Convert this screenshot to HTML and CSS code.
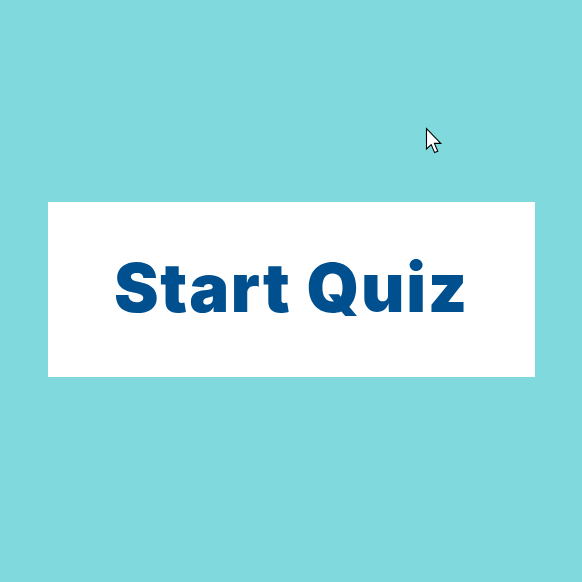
FILE: index.html
```html
<!DOCTYPE html>
<html>
<head>
<meta charset="utf-8">
<link rel="stylesheet" href="styles.css">
</head>
<body>
<div class="stage">
  <button class="start-btn">Start Quiz</button>
  <svg class="cursor" width="20" height="30" viewBox="0 0 20 30">
    <path d="M1.5 1.5 L1.5 22 L6.2 17.6 L9.6 25.6 L12.8 24.2 L9.4 16.4 L15.8 16.4 Z" fill="#ffffff" stroke="#000000" stroke-width="1.1" stroke-linejoin="miter"/>
  </svg>
</div>
</body>
</html>
```
FILE: styles.css
```css
html, body {
  margin: 0;
  padding: 0;
}
body {
  width: 582px;
  height: 582px;
  background: #7fd9dd;
  overflow: hidden;
}
.stage {
  position: relative;
  width: 582px;
  height: 582px;
  padding-top: 202px;
  padding-left: 48px;
  box-sizing: border-box;
}
.start-btn {
  display: flex;
  align-items: center;
  justify-content: center;
  width: 487px;
  height: 175px;
  border: none;
  margin: 0;
  padding: 0 0 4px 0;
  background: #ffffff;
  color: #00508f;
  font-family: "Inter", "Liberation Sans", sans-serif;
  font-weight: 900;
  font-size: 67px;
  letter-spacing: 1.7px;
  line-height: 1;
}
.cursor {
  position: absolute;
  left: 425px;
  top: 127px;
}
```
